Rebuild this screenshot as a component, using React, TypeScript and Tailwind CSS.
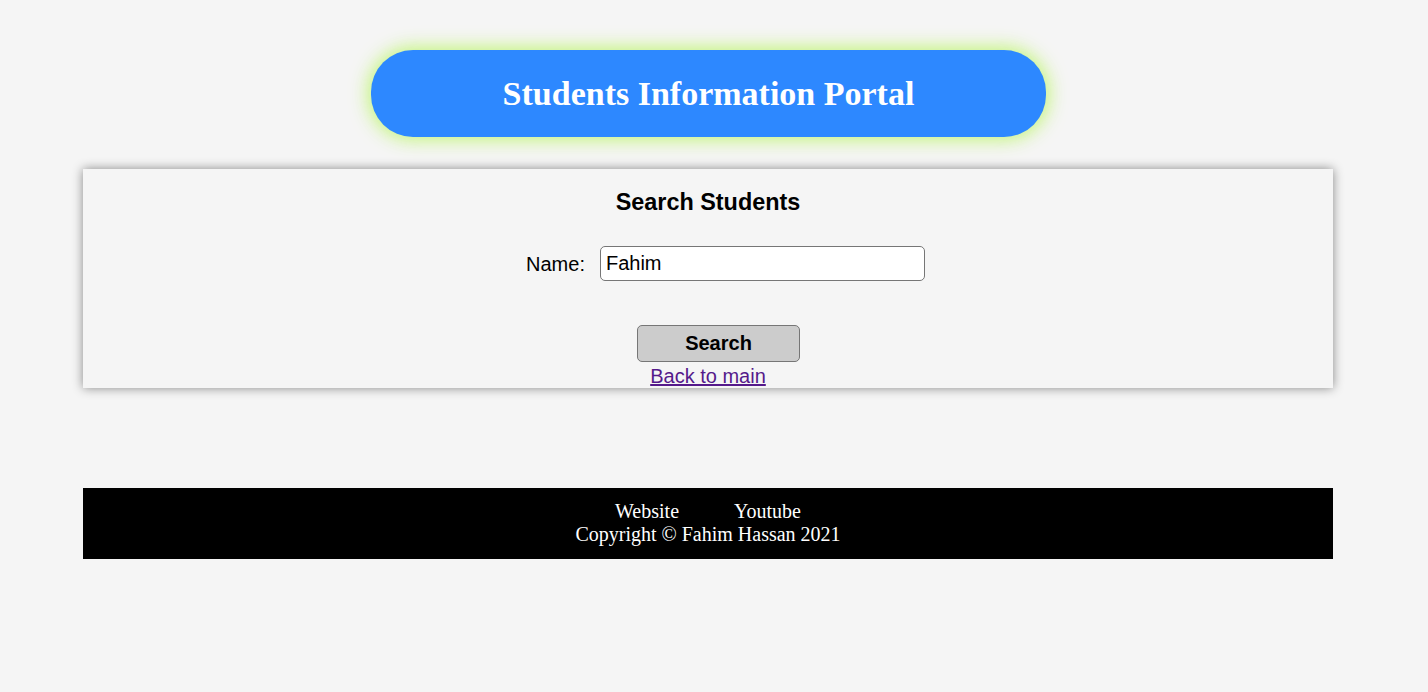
export default function App() {
  return (
    <div className="min-h-[692px] bg-[#f5f5f5] pt-[50px] font-['Liberation_Sans',Arial,sans-serif] text-[20px] text-black">
      {/* header pill */}
      <div className="ml-[371px] flex h-[87px] w-[675px] items-center justify-center rounded-[42px] bg-[#2d88ff] shadow-[0_0_18px_3px_rgba(190,245,110,0.9)]">
        <h1 className="font-['Liberation_Serif','Times_New_Roman',serif] text-[34px] font-bold leading-none text-white">
          Students Information Portal
        </h1>
      </div>

      {/* search card */}
      <div className="ml-[83px] mt-[32px] flex w-[1250px] flex-col items-center bg-[#f5f5f5] pt-[20px] shadow-[0_0_10px_rgba(0,0,0,0.45)]">
        <h3 className="text-[23.4px] font-bold leading-[27px]">Search Students</h3>
        <div className="mt-[30px] flex items-center gap-[15px] pl-[35px]">
          <label htmlFor="name">Name:</label>
          <input
            id="name"
            defaultValue="Fahim"
            className="h-[35px] w-[325px] rounded-[5px] border border-[#767676] bg-white px-[5px] text-[20px] outline-none"
          />
        </div>
        <button className="ml-[21px] mt-[44px] h-[37px] w-[163px] rounded-[5px] border border-[#767676] bg-[#cccccc] pb-[1px] text-[20px] font-bold">
          Search
        </button>
        <a href="#" className="mt-[3px] leading-[23px] text-[#551a8b] underline">
          Back to main
        </a>
      </div>

      {/* footer */}
      <footer className="ml-[83px] mt-[100px] flex w-[1250px] flex-col items-center bg-black pb-[13px] pt-[12px] font-['Liberation_Serif','Times_New_Roman',serif] text-[20px] leading-[23px] text-white">
        <div className="flex gap-[55px]">
          <a href="#">Website</a>
          <a href="#">Youtube</a>
        </div>
        <p>Copyright © Fahim Hassan 2021</p>
      </footer>
    </div>
  );
}
